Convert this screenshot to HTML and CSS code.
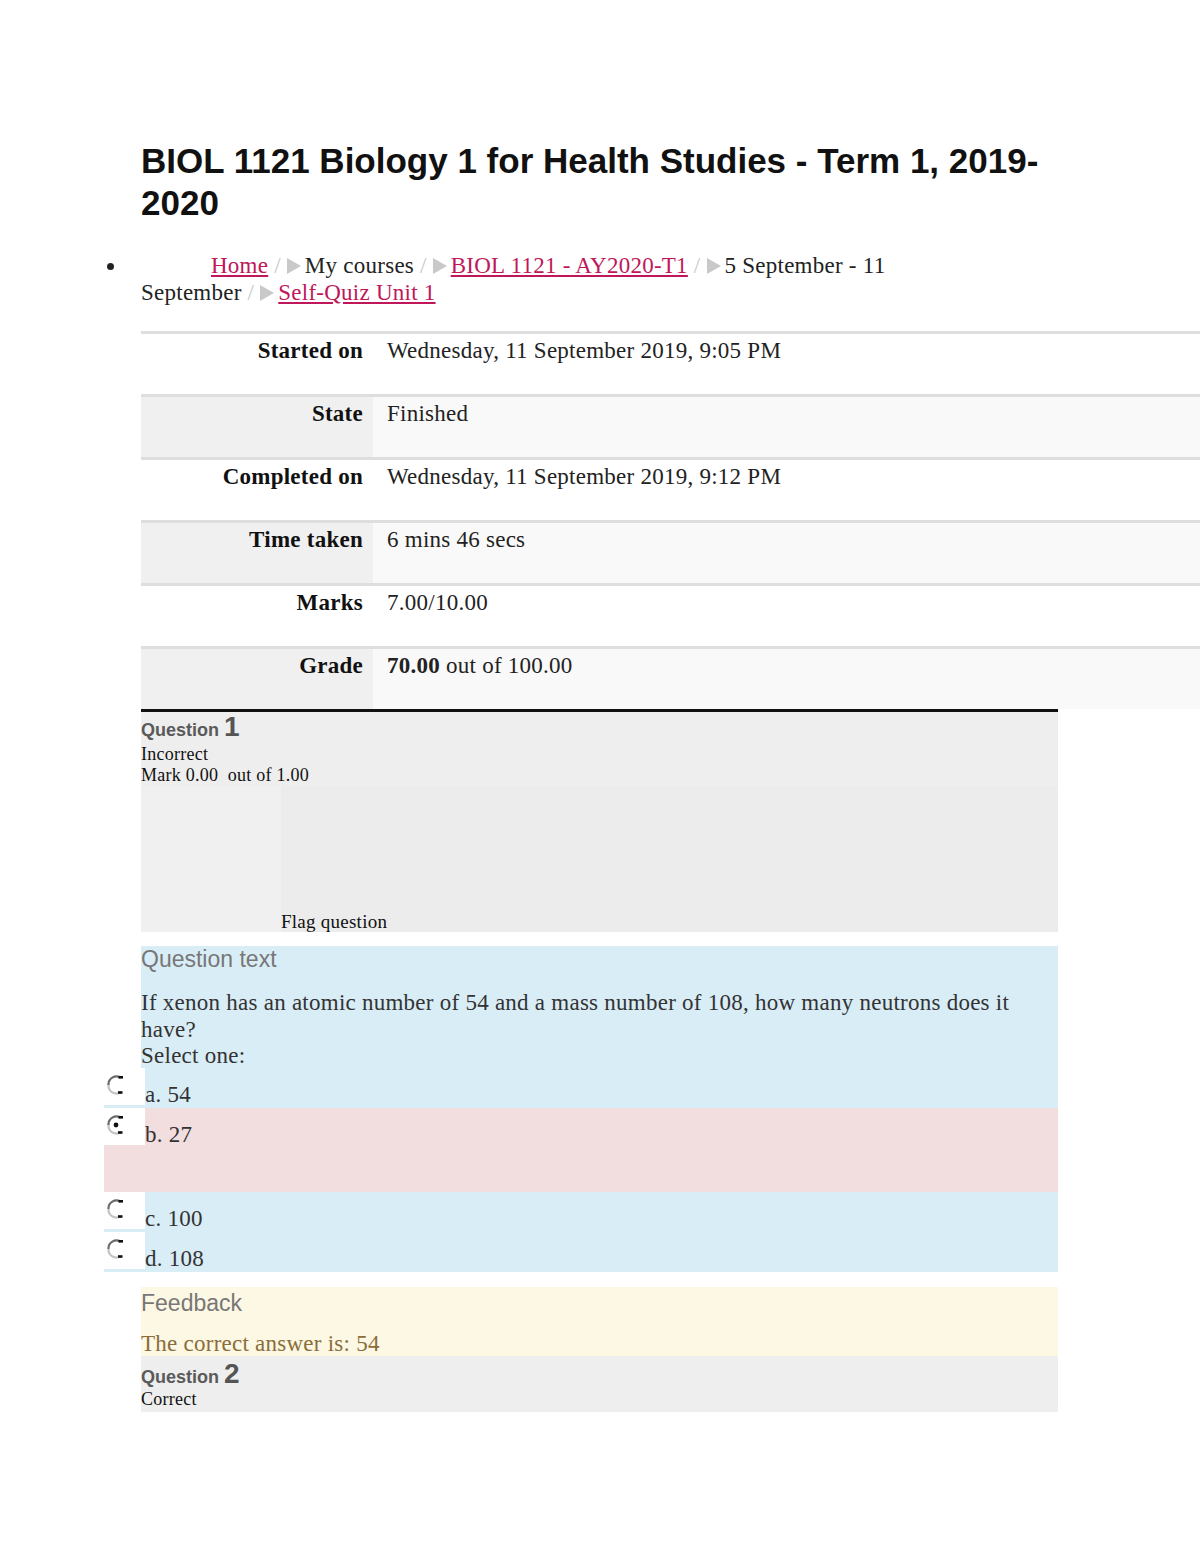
FILE: index.html
```html
<!DOCTYPE html>
<html lang="en">
<head>
<meta charset="utf-8">
<title>BIOL 1121 Self-Quiz Unit 1</title>
<link rel="stylesheet" href="styles.css">
</head>
<body>
<div class="page">
  <h1 class="course-title">BIOL 1121 Biology 1 for Health Studies - Term 1, 2019-2020</h1>

  <ul class="breadcrumb">
    <li><a href="#">Home</a><span class="sep">/</span><span class="tri"></span><span>My courses</span><span class="sep">/</span><span class="tri"></span><a href="#">BIOL 1121 - AY2020-T1</a><span class="sep">/</span><span class="tri"></span><span>5 September - 11</span> <span>September</span><span class="sep">/</span><span class="tri"></span><a href="#">Self-Quiz Unit 1</a></li>
  </ul>

  <table class="summary">
    <tr><th>Started on</th><td>Wednesday, 11 September 2019, 9:05 PM</td></tr>
    <tr class="alt"><th>State</th><td>Finished</td></tr>
    <tr><th>Completed on</th><td>Wednesday, 11 September 2019, 9:12 PM</td></tr>
    <tr class="alt"><th>Time taken</th><td>6 mins 46 secs</td></tr>
    <tr><th>Marks</th><td>7.00/10.00</td></tr>
    <tr class="alt"><th>Grade</th><td><b>70.00</b> out of 100.00</td></tr>
  </table>

  <div class="qinfo first">
    <div class="qno">Question <span class="num">1</span></div>
    <div class="qstate">Incorrect</div>
    <div class="qgrade">Mark 0.00&nbsp; out of 1.00</div>
    <div class="flagrow">
      <div class="flagspace"></div>
      <div class="flag">Flag question</div>
    </div>
  </div>

  <div class="formulation">
    <h4 class="sub">Question text</h4>
    <p class="qtext">If xenon has an atomic number of 54 and a mass number of 108, how many neutrons does it have?</p>
    <div class="prompt">Select one:</div>
    <div class="answers">
      <div class="ans">
        <div class="rcell"><svg class="radio" viewBox="0 0 20 22" width="20" height="22"><path d="M13.6 3.6 A8 8 0 0 0 1.5 11" fill="none" stroke="#6a6a6a" stroke-width="2.2"/><path d="M1.5 11 A8 8 0 0 0 13.6 18.4" fill="none" stroke="#c2c2c2" stroke-width="2.2"/><rect x="11.5" y="2" width="4.5" height="2.6" fill="#111"/><rect x="11" y="17.2" width="4.5" height="2.6" fill="#111"/></svg></div>
        <div class="alabel">a. 54</div>
      </div>
      <div class="ans wrong">
        <div class="rcell"><svg class="radio" viewBox="0 0 20 22" width="20" height="22"><path d="M13.6 3.6 A8 8 0 0 0 1.5 11" fill="none" stroke="#6a6a6a" stroke-width="2.2"/><path d="M1.5 11 A8 8 0 0 0 13.6 18.4" fill="none" stroke="#c2c2c2" stroke-width="2.2"/><rect x="11.5" y="2" width="4.5" height="2.6" fill="#111"/><rect x="11" y="17.2" width="4.5" height="2.6" fill="#111"/><circle cx="9" cy="11" r="2.4" fill="#111"/></svg></div>
        <div class="alabel">b. 27</div>
      </div>
      <div class="ans">
        <div class="rcell"><svg class="radio" viewBox="0 0 20 22" width="20" height="22"><path d="M13.6 3.6 A8 8 0 0 0 1.5 11" fill="none" stroke="#6a6a6a" stroke-width="2.2"/><path d="M1.5 11 A8 8 0 0 0 13.6 18.4" fill="none" stroke="#c2c2c2" stroke-width="2.2"/><rect x="11.5" y="2" width="4.5" height="2.6" fill="#111"/><rect x="11" y="17.2" width="4.5" height="2.6" fill="#111"/></svg></div>
        <div class="alabel">c. 100</div>
      </div>
      <div class="ans">
        <div class="rcell"><svg class="radio" viewBox="0 0 20 22" width="20" height="22"><path d="M13.6 3.6 A8 8 0 0 0 1.5 11" fill="none" stroke="#6a6a6a" stroke-width="2.2"/><path d="M1.5 11 A8 8 0 0 0 13.6 18.4" fill="none" stroke="#c2c2c2" stroke-width="2.2"/><rect x="11.5" y="2" width="4.5" height="2.6" fill="#111"/><rect x="11" y="17.2" width="4.5" height="2.6" fill="#111"/></svg></div>
        <div class="alabel">d. 108</div>
      </div>
    </div>
  </div>

  <div class="feedback">
    <h4 class="sub">Feedback</h4>
    <div class="rightanswer">The correct answer is: 54</div>
  </div>

  <div class="qinfo second">
    <div class="qno">Question <span class="num">2</span></div>
    <div class="qstate">Correct</div>
  </div>
</div>
</body>
</html>
```

FILE: styles.css
```css
html, body {
  overflow-x: hidden;
}

body {
  margin: 0;
  background: #ffffff;
  color: #000;
  font-family: "Liberation Serif", "Times New Roman", serif;
  letter-spacing: 0.25px;
}

.page {
  width: 917px;
  margin-left: 141px;
  padding-top: 140px;
  padding-bottom: 100px;
}

.course-title {
  margin: 0;
  font-family: "Liberation Sans", Arial, sans-serif;
  font-weight: bold;
  font-size: 35px;
  line-height: 42px;
  letter-spacing: 0;
  color: #111;
}

.breadcrumb {
  width: 814px;
  margin: 28px 0 0 -14px;
  padding: 0;
  font-size: 23px;
  line-height: 27px;
  color: #222;
}

.breadcrumb li {
  padding-left: 14px;
  text-indent: 70px;
}

.breadcrumb a {
  color: #c0175a;
  text-decoration: underline;
}

.breadcrumb .sep {
  color: #c8c8c8;
  margin: 0 6px;
}

.breadcrumb .tri {
  display: inline-block;
  width: 0;
  height: 0;
  border-left: 14px solid #c9c9c9;
  border-top: 8px solid transparent;
  border-bottom: 8px solid transparent;
  margin-right: 4px;
  vertical-align: -1px;
  text-indent: 0;
}

.summary {
  margin-top: 25px;
  width: 1059px;
  border-collapse: collapse;
  font-size: 23px;
  line-height: 27px;
}

.summary tr {
  border-top: 3px solid #dedede;
}

.summary th {
  width: 232px;
  box-sizing: border-box;
  text-align: right;
  vertical-align: top;
  font-weight: bold;
  padding: 3px 10px 30px 10px;
  color: #111;
}

.summary td {
  text-align: left;
  vertical-align: top;
  padding: 3px 14px 30px 14px;
  color: #222;
}

.summary tr.alt th {
  background: #f0f0f0;
}

.summary tr.alt td {
  background: #f9f9f9;
}

.qinfo {
  background: #eeeeee;
}

.qinfo.first {
  border-top: 3px solid #111;
}

.qinfo.second {
  padding: 3px 0 2px 0;
}

.qno {
  height: 30px;
  font-family: "Liberation Sans", Arial, sans-serif;
  font-weight: bold;
  font-size: 18px;
  line-height: 30px;
  letter-spacing: 0;
  color: #5a5a5a;
}

.qno .num {
  font-size: 28px;
  color: #555;
}

.qstate, .qgrade {
  font-size: 18px;
  line-height: 21px;
  color: #111;
}

.first .qstate {
  margin-top: 2px;
}

.flagrow {
  display: flex;
  height: 146px;
}

.flagspace {
  width: 140px;
  background: #f0f0f0;
}

.flag {
  flex: 1;
  display: flex;
  align-items: flex-end;
  font-size: 19px;
  line-height: 21px;
  color: #111;
  background: #ececec;
}

.formulation {
  margin-top: 14px;
  background: #d9edf7;
  color: #333;
}

.sub {
  margin: 0;
  font-family: "Liberation Sans", Arial, sans-serif;
  font-weight: normal;
  font-size: 23px;
  line-height: 26px;
  letter-spacing: 0;
  color: #777;
}

.qtext {
  margin: 17px 0 0 0;
  font-size: 23px;
  line-height: 27px;
  color: #333;
}

.prompt {
  font-size: 23px;
  line-height: 25px;
  color: #333;
}

.answers {
  margin-left: -37px;
}

.ans {
  display: flex;
  background: #d9edf7;
}

.ans.wrong {
  background: #f2dede;
  padding-bottom: 44px;
}

.rcell {
  width: 41px;
  height: 37px;
  flex: none;
  background: #ffffff;
}

.radio {
  display: block;
  margin: 6px 0 0 3px;
}

.alabel {
  padding-top: 13px;
  font-size: 23px;
  line-height: 27px;
  color: #333;
}

.feedback {
  margin-top: 15px;
  padding-top: 3px;
  background: #fcf8e3;
}

.rightanswer {
  margin-top: 15px;
  font-size: 23px;
  line-height: 25px;
  color: #8a6d3b;
}
```
